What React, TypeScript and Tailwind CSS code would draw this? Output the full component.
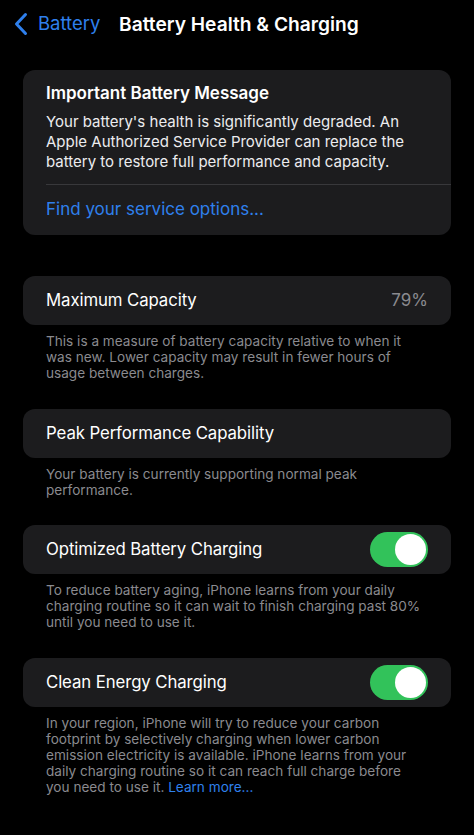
import React from 'react';

const font = { fontFamily: 'Inter, "Liberation Sans", sans-serif' };

const Toggle: React.FC = () => (
  <div className="w-[58px] h-[35px] rounded-full bg-[#32c25a] p-[2px] flex justify-end">
    <div className="w-[31px] h-[31px] rounded-full bg-white" />
  </div>
);

interface RowProps {
  label: string;
  right?: React.ReactNode;
}

const Row: React.FC<RowProps> = ({ label, right }) => (
  <div className="h-[49px] rounded-[12px] bg-[#1c1c1e] pl-[23px] pr-[23px] flex items-center justify-between">
    <span className="text-[16.8px] text-white tracking-[-0.1px]">{label}</span>
    {right}
  </div>
);

const Note: React.FC<{ children: React.ReactNode }> = ({ children }) => (
  <p className="mt-[8px] pl-[23px] pr-[24px] text-[13.6px] leading-[16px] text-[#8a8a8f]">{children}</p>
);

export default function App() {
  return (
    <div className="min-h-screen w-[474px] bg-black pb-[40px]" style={font}>
      {/* Nav bar */}
      <div className="h-[50px] pb-[2px] flex items-center">
        <div className="flex items-center pl-[13px] w-[119px]">
          <svg width="16" height="24" viewBox="0 0 16 24" fill="none">
            <path d="M12.5 2.5 L3.5 12 L12.5 21.5" stroke="#2f80ed" strokeWidth="3" strokeLinecap="round" strokeLinejoin="round" />
          </svg>
          <span className="ml-[9px] text-[18.5px] text-[#2f80ed]">Battery</span>
        </div>
        <span className="text-[19.2px] font-semibold text-white">Battery Health &amp; Charging</span>
      </div>

      <div className="px-[23px] mt-[20px]">
        {/* Important message */}
        <div className="rounded-[12px] bg-[#1c1c1e] pl-[23px]">
          <div className="pt-[12px] pr-[20px] pb-[12px]">
            <div className="text-[17px] leading-[22px] font-semibold text-white">Important Battery Message</div>
            <p className="mt-[8px] text-[15px] leading-[20px] text-[#ececef]">
              Your battery's health is significantly degraded. An Apple Authorized Service Provider can replace the battery to restore full performance and capacity.
            </p>
          </div>
          <div className="h-px bg-[#38383b]" />
          <div className="h-[50px] flex items-center text-[17px] text-[#2f80ed]">Find your service options...</div>
        </div>

        <div className="mt-[41px]">
          <Row label="Maximum Capacity" right={<span className="text-[17px] text-[#8a8a8f]">79%</span>} />
          <Note>This is a measure of battery capacity relative to when it was new. Lower capacity may result in fewer hours of usage between charges.</Note>
        </div>

        <div className="mt-[28px]">
          <Row label="Peak Performance Capability" />
          <Note>Your battery is currently supporting normal peak performance.</Note>
        </div>

        <div className="mt-[27px]">
          <Row label="Optimized Battery Charging" right={<Toggle />} />
          <Note>To reduce battery aging, iPhone learns from your daily charging routine so it can wait to finish charging past 80% until you need to use it.</Note>
        </div>

        <div className="mt-[28px]">
          <Row label="Clean Energy Charging" right={<Toggle />} />
          <Note>
            In your region, iPhone will try to reduce your carbon footprint by selectively charging when lower carbon emission electricity is available. iPhone learns from your daily charging routine so it can reach full charge before you need to use it.{' '}
            <span className="text-[#2f80ed]">Learn more...</span>
          </Note>
        </div>
      </div>
    </div>
  );
}
